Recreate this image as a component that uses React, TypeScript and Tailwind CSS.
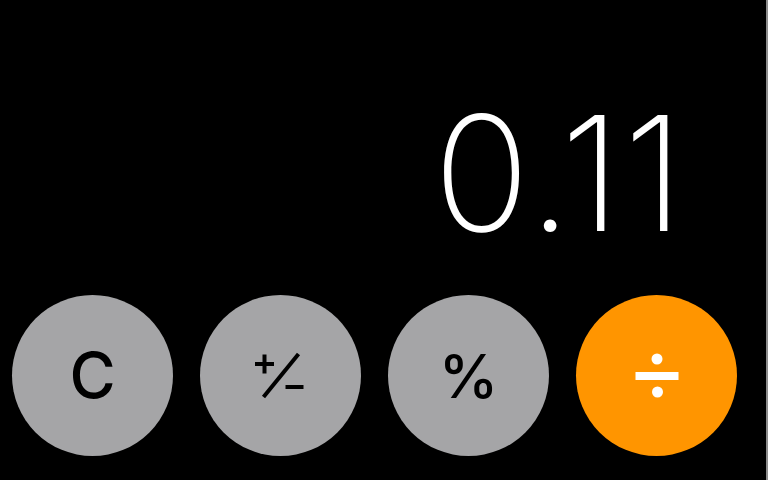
import React from 'react';

const font = { fontFamily: 'Inter, "Noto Sans", sans-serif' };

function PlusMinus() {
  return (
    <svg width="60" height="60" viewBox="-30 -30 60 60" fill="none" stroke="#000" strokeWidth="4" strokeLinecap="butt">
      <line x1="-26" y1="-12" x2="-7" y2="-12" />
      <line x1="-16.5" y1="-21.5" x2="-16.5" y2="-2.5" />
      <line x1="17.5" y1="-22" x2="-17.5" y2="21" />
      <line x1="4.5" y1="11" x2="22.5" y2="11" />
    </svg>
  );
}

function Divide() {
  return (
    <svg width="60" height="60" viewBox="-30 -30 60 60" fill="#fff">
      <circle cx="0" cy="-17" r="5.5" />
      <rect x="-21.5" y="-4" width="43" height="8" />
      <circle cx="0.5" cy="16" r="5.5" />
    </svg>
  );
}

export default function App() {
  return (
    <div className="w-[768px] h-[480px] bg-black flex flex-col overflow-hidden border-r-2 border-[#8d8d8d]" style={font}>
      {/* Display */}
      <div className="h-[295px] flex items-end justify-end pr-[80px] pb-[42px]">
        <span className="text-white text-[160px] font-extralight leading-none tracking-[2px]">0.11</span>
      </div>

      {/* Button row */}
      <div className="flex gap-[27px] pl-[12px]">
        <button className="w-[161px] h-[161px] rounded-full bg-[#a5a5a7] flex items-center justify-center text-black text-[63px] font-medium leading-none">
          C
        </button>
        <button className="w-[161px] h-[161px] rounded-full bg-[#a5a5a7] flex items-center justify-center">
          <PlusMinus />
        </button>
        <button className="w-[161px] h-[161px] rounded-full bg-[#a5a5a7] flex items-center justify-center text-black text-[60px] font-medium leading-none">
          %
        </button>
        <button className="w-[161px] h-[161px] rounded-full bg-[#ff9500] flex items-center justify-center">
          <Divide />
        </button>
      </div>
    </div>
  );
}
